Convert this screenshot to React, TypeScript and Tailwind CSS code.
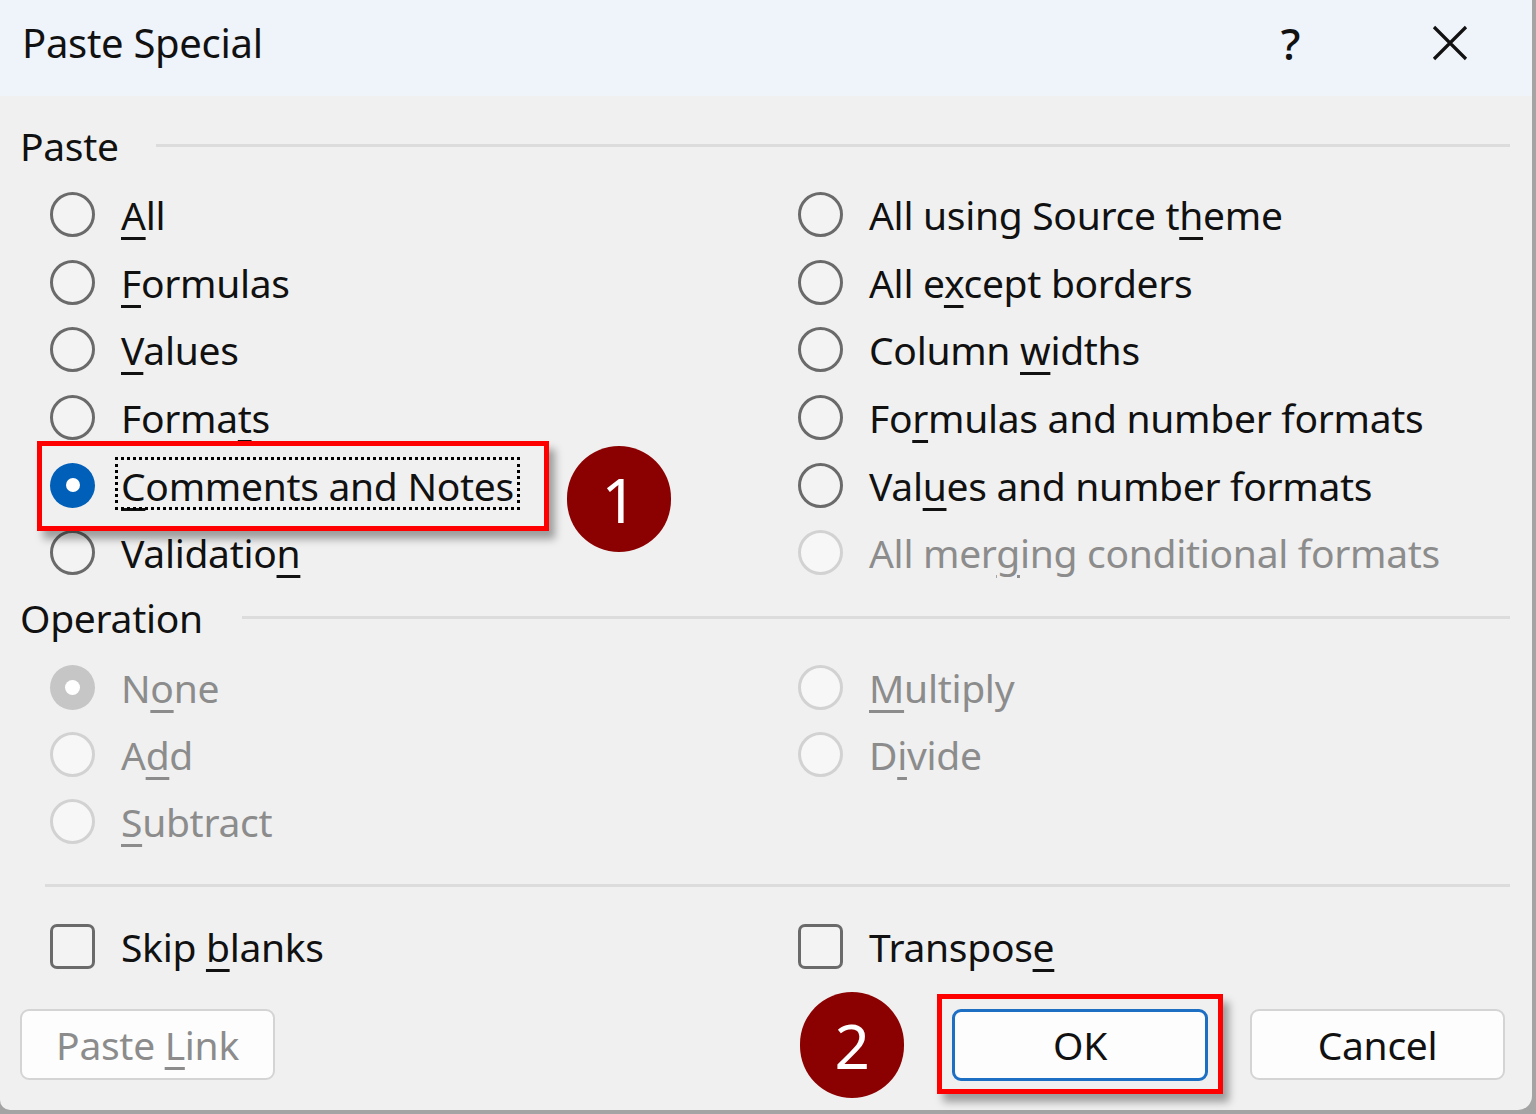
import React from 'react'

type Opt = { label: string; key: number; checked?: boolean; disabled?: boolean }

const pasteLeft: Opt[] = [
  { label: 'All', key: 0 },
  { label: 'Formulas', key: 0 },
  { label: 'Values', key: 0 },
  { label: 'Formats', key: 5 },
  { label: 'Comments and Notes', key: 0, checked: true },
  { label: 'Validation', key: 9 },
]

const pasteRight: Opt[] = [
  { label: 'All using Source theme', key: 18 },
  { label: 'All except borders', key: 5 },
  { label: 'Column widths', key: 7 },
  { label: 'Formulas and number formats', key: 2 },
  { label: 'Values and number formats', key: 3 },
  { label: 'All merging conditional formats', key: 7, disabled: true },
]

const opLeft: Opt[] = [
  { label: 'None', key: 1, checked: true, disabled: true },
  { label: 'Add', key: 1, disabled: true },
  { label: 'Subtract', key: 0, disabled: true },
]

const opRight: Opt[] = [
  { label: 'Multiply', key: 0, disabled: true },
  { label: 'Divide', key: 1, disabled: true },
]

function Label({ text, k }: { text: string; k: number }) {
  return (
    <span className="whitespace-pre">
      {text.slice(0, k)}
      <span className="underline decoration-[3px] underline-offset-[7px]">{text[k]}</span>
      {text.slice(k + 1)}
    </span>
  )
}

function Radio({ checked, disabled }: { checked?: boolean; disabled?: boolean }) {
  if (checked && disabled) {
    return (
      <span className="flex h-[45px] w-[45px] shrink-0 items-center justify-center rounded-full bg-[#c6c6c6]">
        <span className="h-[15px] w-[15px] rounded-full bg-white" />
      </span>
    )
  }
  if (checked) {
    return (
      <span className="flex h-[45px] w-[45px] shrink-0 items-center justify-center rounded-full bg-[#005fb8]">
        <span className="h-[14px] w-[14px] rounded-full bg-white" />
      </span>
    )
  }
  return (
    <span
      className={
        disabled
          ? 'h-[45px] w-[45px] shrink-0 rounded-full border-[3px] border-[#d2d2d2] bg-[#f7f7f7]'
          : 'h-[45px] w-[45px] shrink-0 rounded-full border-[3px] border-[#6a6a6a] bg-[#f3f3f3]'
      }
    />
  )
}

function RadioRow({ opt, h }: { opt: Opt; h: string }) {
  return (
    <div className={`flex items-center gap-[26px] ${h}`}>
      <Radio checked={opt.checked} disabled={opt.disabled} />
      <span
        className={
          opt.checked && !opt.disabled
            ? 'relative text-[#111]'
            : opt.disabled
              ? 'text-[#8c8c8c]'
              : 'text-[#111]'
        }
      >
        {opt.checked && !opt.disabled && (
          <span className="absolute -left-[6px] -right-[6px] -top-[9px] -bottom-[5px] border-[3px] border-dotted border-black" />
        )}
        <Label text={opt.label} k={opt.key} />
      </span>
    </div>
  )
}

function SectionHeader({ title, gap }: { title: string; gap: string }) {
  return (
    <div className="flex h-[50px] items-center pl-[20px] pr-[22px]">
      <span className="text-[#111]">{title}</span>
      <div className={`h-[3px] flex-1 bg-[#dcdcdc] ${gap}`} />
    </div>
  )
}

function Checkbox({ label, k }: { label: string; k: number }) {
  return (
    <div className="flex h-[67px] items-center gap-[26px]">
      <span className="h-[45px] w-[45px] shrink-0 rounded-[7px] border-[3px] border-[#6a6a6a] bg-[#f3f3f3]" />
      <span className="text-[#111]">
        <Label text={label} k={k} />
      </span>
    </div>
  )
}

function Marker({ n, className }: { n: string; className: string }) {
  return (
    <div
      className={`absolute flex h-[106px] w-[104px] items-center justify-center rounded-full bg-[#8b0000] text-[62px] leading-none text-white ${className}`}
    >
      {n}
    </div>
  )
}

export default function App() {
  return (
    <div className="relative h-[1114px] w-[1536px] overflow-hidden bg-[#a4a4a4] font-['Noto_Sans',sans-serif] text-[39px] leading-none tracking-[-0.3px]">
      <div className="flex h-[1110px] w-[1532px] flex-col overflow-hidden rounded-br-[14px] rounded-bl-[10px] bg-[#f0f0f0]">
        {/* title bar */}
        <div className="flex h-[96px] shrink-0 items-center bg-[#eff3fa] pb-[10px] pl-[22px] pr-[64px]">
          <span className="flex-1 text-[40px] text-[#111]">Paste Special</span>
          <span className="mr-[132px] text-[44px] font-medium text-[#111]">?</span>
          <svg width="36" height="36" viewBox="0 0 36 36">
            <path d="M2 2 L34 34 M34 2 L2 34" stroke="#111" strokeWidth="3.2" />
          </svg>
        </div>

        {/* paste */}
        <div className="mt-[24px]">
          <SectionHeader title="Paste" gap="ml-[37px]" />
        </div>
        <div className="mt-[11px] grid grid-cols-[748px_1fr] pl-[50px]">
          <div className="flex flex-col">
            {pasteLeft.map((o) => (
              <RadioRow key={o.label} opt={o} h="h-[67.6px]" />
            ))}
          </div>
          <div className="flex flex-col">
            {pasteRight.map((o) => (
              <RadioRow key={o.label} opt={o} h="h-[67.6px]" />
            ))}
          </div>
        </div>

        {/* operation */}
        <div className="mt-[6px]">
          <SectionHeader title="Operation" gap="ml-[39px]" />
        </div>
        <div className="mt-[11px] grid grid-cols-[748px_1fr] pl-[50px]">
          <div className="flex flex-col">
            {opLeft.map((o) => (
              <RadioRow key={o.label} opt={o} h="h-[67px]" />
            ))}
          </div>
          <div className="flex flex-col">
            {opRight.map((o) => (
              <RadioRow key={o.label} opt={o} h="h-[67px]" />
            ))}
          </div>
        </div>

        <div className="ml-[45px] mr-[22px] mt-[29px] h-[3px] bg-[#dcdcdc]" />

        <div className="mt-[26px] grid grid-cols-[748px_1fr] pl-[50px]">
          <Checkbox label="Skip blanks" k={5} />
          <Checkbox label="Transpose" k={8} />
        </div>

        {/* buttons */}
        <div className="mt-[29px] flex items-center pl-[20px] pr-[27px]">
          <button className="flex h-[71px] w-[255px] items-center justify-center rounded-[9px] border-[2px] border-[#d4d4d4] bg-[#fdfdfd] text-[#8c8c8c]">
            <Label text="Paste Link" k={6} />
          </button>
          <div className="flex-1" />
          <button className="flex h-[72px] w-[256px] items-center justify-center rounded-[9px] border-[3px] border-[#1d6fc4] bg-[#fdfdfd] text-[#111]">
            OK
          </button>
          <button className="ml-[42px] flex h-[71px] w-[255px] items-center justify-center rounded-[9px] border-[2px] border-[#d4d4d4] bg-[#fdfdfd] text-[#111]">
            Cancel
          </button>
        </div>
      </div>

      {/* annotations */}
      <div className="absolute left-[37px] top-[441px] h-[90px] w-[512px] border-[5px] border-[#ff0000] shadow-[6px_8px_8px_rgba(0,0,0,0.35)]" />
      <Marker n="1" className="left-[567px] top-[446px]" />
      <div className="absolute left-[937px] top-[994px] h-[100px] w-[286px] border-[5px] border-[#ff0000] shadow-[6px_8px_8px_rgba(0,0,0,0.35)]" />
      <Marker n="2" className="left-[800px] top-[992px]" />
    </div>
  )
}
